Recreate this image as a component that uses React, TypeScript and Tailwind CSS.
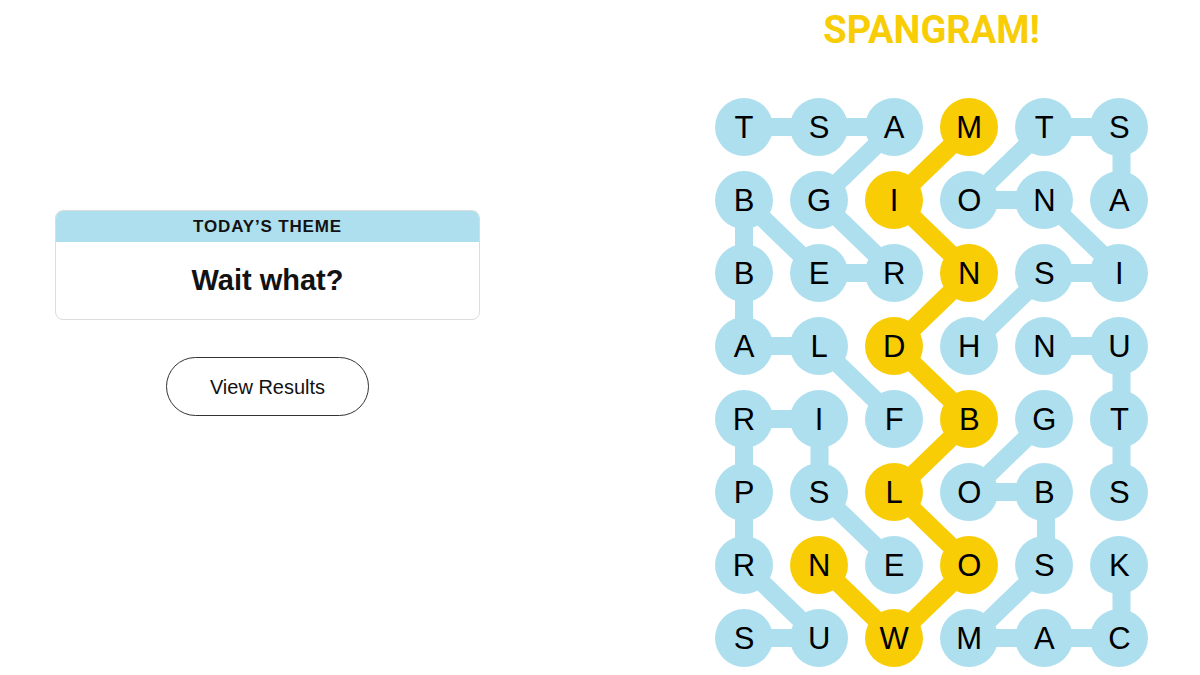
const ROWS = [
  'TSAMTS',
  'BGIONA',
  'BERNSI',
  'ALDHNU',
  'RIFBGT',
  'PSLOBS',
  'RNEOSK',
  'SUWMAC',
];

// found words as [row, col] chains
const WORDS: [number, number][][] = [
  // FLABBERGAST
  [[4, 2], [3, 1], [3, 0], [2, 0], [1, 0], [2, 1], [2, 2], [1, 1], [0, 2], [0, 1], [0, 0]],
  // ASTONISH
  [[1, 5], [0, 5], [0, 4], [1, 3], [1, 4], [2, 5], [2, 4], [3, 3]],
  // STUN
  [[5, 5], [4, 5], [3, 5], [3, 4]],
  // GOBSMACK
  [[4, 4], [5, 3], [5, 4], [6, 4], [7, 3], [7, 4], [7, 5], [6, 5]],
  // SURPRISE
  [[7, 0], [7, 1], [6, 0], [5, 0], [4, 0], [4, 1], [5, 1], [6, 2]],
];

const SPANGRAM: [number, number][] = [
  [0, 3], [1, 2], [2, 3], [3, 2], [4, 3], [5, 2], [6, 3], [7, 2], [6, 1],
];

const BLUE = '#aedfee';
const YELLOW = '#f8cd05';

const cx = (c: number) => 29 + c * 75.5;
const cy = (r: number) => 29 + r * 73;

const isSpan = (r: number, c: number) => SPANGRAM.some(([a, b]) => a === r && b === c);

const Path = ({ cells, color }: { cells: [number, number][]; color: string }) => (
  <polyline
    points={cells.map(([r, c]) => `${cx(c)},${cy(r)}`).join(' ')}
    fill="none"
    stroke={color}
    strokeWidth={18}
    strokeLinejoin="round"
    strokeLinecap="round"
  />
);

export default function App() {
  return (
    <div className="w-[1200px] h-[675px] bg-white flex overflow-hidden font-['Liberation_Sans',Arial,sans-serif] text-black">
      {/* Left panel */}
      <div className="w-[535px] shrink-0 pt-[210px] flex flex-col items-center">
        <div className="w-[425px] rounded-[8px] border border-[#dcdcdc] overflow-hidden">
          <div className="h-[31px] bg-[#aedfee] flex items-center justify-center text-[17px] font-bold tracking-[0.05em] text-[#121212]">
            TODAY’S THEME
          </div>
          <div className="h-[77px] flex items-center justify-center text-[29px] font-bold text-[#121212]">
            Wait what?
          </div>
        </div>
        <button className="mt-[37px] w-[203px] h-[59px] rounded-full border border-[#333] bg-white text-[20px] text-[#121212] flex items-center justify-center">
          View Results
        </button>
      </div>

      {/* Board */}
      <div className="ml-[180px] w-[433px] flex flex-col items-center">
        <h1 className="pt-[10px] h-[50px] leading-[40px] text-[38px] font-bold text-[#f8cd05] font-['Roboto',sans-serif]">
          SPANGRAM!
        </h1>
        <div className="relative mt-[48px] w-[433px] h-[569px]">
          <svg className="absolute inset-0" width={433} height={569} viewBox="0 0 433 569">
            {WORDS.map((w, i) => (
              <Path key={i} cells={w} color={BLUE} />
            ))}
            <Path cells={SPANGRAM} color={YELLOW} />
          </svg>
          <div className="relative grid grid-cols-6 gap-x-[17.5px] gap-y-[15px]">
            {ROWS.map((row, r) =>
              row.split('').map((ch, c) => (
                <div
                  key={`${r}-${c}`}
                  className={`w-[58px] h-[58px] rounded-full flex items-center justify-center text-[31px] leading-none ${
                    isSpan(r, c) ? 'bg-[#f8cd05]' : 'bg-[#aedfee]'
                  }`}
                >
                  {ch}
                </div>
              ))
            )}
          </div>
        </div>
      </div>
    </div>
  );
}
